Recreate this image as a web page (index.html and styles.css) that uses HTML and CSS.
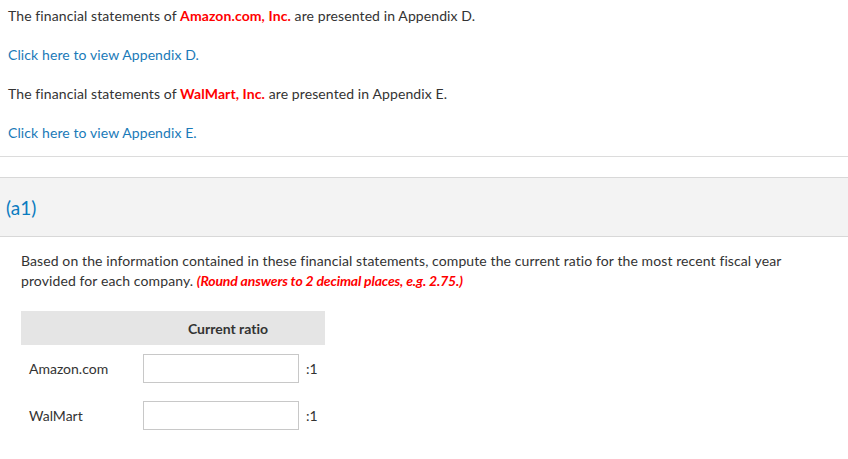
FILE: index.html
```html
<!DOCTYPE html>
<html>
<head>
<meta charset="utf-8">
<link rel="stylesheet" href="styles.css">
</head>
<body>
<div class="intro">
  <p>The financial statements of <span class="co">Amazon.com, Inc.</span> are presented in Appendix D.</p>
  <p><a class="link" href="#">Click here to view Appendix D.</a></p>
  <p>The financial statements of <span class="co">WalMart, Inc.</span> are presented in Appendix E.</p>
  <p><a class="link" href="#">Click here to view Appendix E.</a></p>
</div>
<div class="part-head">
  <span class="part-label">(a1)</span>
</div>
<div class="question">
  <p class="prompt">Based on the information contained in these financial statements, compute the current ratio for the most recent fiscal year provided for each company. <em class="hint">(Round answers to 2 decimal places, e.g. 2.75.)</em></p>
  <div class="ratio-table">
    <div class="thead">
      <div class="th-blank"></div>
      <div class="th">Current ratio</div>
    </div>
    <div class="row">
      <div class="name">Amazon.com</div>
      <div class="cell"><span class="box"></span><span class="suffix">:1</span></div>
    </div>
    <div class="row">
      <div class="name">WalMart</div>
      <div class="cell"><span class="box"></span><span class="suffix">:1</span></div>
    </div>
  </div>
</div>
</body>
</html>
```

FILE: styles.css
```css
html, body {
  margin: 0;
  padding: 0;
  background: #fff;
}
body {
  font-family: Lato, "Liberation Sans", sans-serif;
  font-size: 14px;
  color: #333;
  font-variant-ligatures: none;
}
.intro {
  padding: 6px 8px 14px;
  border-bottom: 1px solid #dcdcdc;
  letter-spacing: 0.1px;
}
.intro p {
  margin: 0 0 20px;
  line-height: 19px;
}
.intro p:last-child {
  margin-bottom: 0;
}
.co {
  color: #f00;
  font-weight: bold;
}
.link {
  color: #1a7ab8;
  text-decoration: none;
}
.part-head {
  margin-top: 20px;
  border-top: 1px solid #d8d8d8;
  border-bottom: 1px solid #d8d8d8;
  background: #f3f3f3;
  height: 58px;
  display: flex;
  align-items: center;
  padding-left: 6px;
}
.part-label {
  color: #0a7bbf;
  font-size: 19px;
}
.question {
  padding: 14px 21px 0;
}
.prompt {
  margin: 0;
  line-height: 20px;
  letter-spacing: 0.1px;
}
.hint {
  color: #f00;
  font-weight: bold;
  font-style: italic;
  letter-spacing: -0.15px;
}
.ratio-table {
  margin-top: 20px;
  width: 304px;
}
.thead {
  display: flex;
  background: #e5e5e5;
  height: 34px;
  align-items: center;
}
.th-blank {
  width: 110px;
}
.th {
  flex: 1;
  text-align: center;
  font-weight: bold;
  font-size: 14px;
  color: #333;
}
.row {
  display: flex;
  align-items: center;
  height: 47px;
}
.name {
  width: 110px;
  padding-left: 8px;
  box-sizing: border-box;
}
.cell {
  flex: 1;
  display: flex;
  align-items: center;
  padding-left: 12px;
}
.box {
  display: block;
  width: 156px;
  height: 29px;
  box-sizing: border-box;
  border: 1px solid #c8c8c8;
  background: #fff;
}
.suffix {
  margin-left: 7px;
}
```
